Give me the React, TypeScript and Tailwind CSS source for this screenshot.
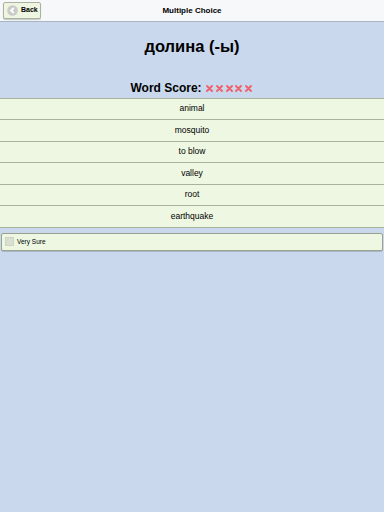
const answers = ["animal", "mosquito", "to blow", "valley", "root", "earthquake"];

const Cross = () => (
  <svg width="7" height="7" viewBox="0 0 7 7" className="mx-[1.4px]">
    <path d="M1 1 L6 6 M6 1 L1 6" stroke="#f0606a" strokeWidth="1.8" strokeLinecap="round" />
  </svg>
);

export default function App() {
  return (
    <div className="w-[384px] h-[512px] bg-[#c9d8ed] font-['Liberation_Sans',Arial,sans-serif] text-black">
      <div className="relative h-[22px] bg-[#f7f8fa] border-b border-[#a9b3c2] flex items-center justify-center">
        <button className="absolute left-[3px] top-[2px] h-[17px] w-[38px] flex items-center gap-[3px] pl-[3px] rounded-[2px] border border-[#a9b49c] bg-[#eef6e2] shadow-[0_1px_1px_rgba(0,0,0,0.2)]">
          <svg width="11" height="11" viewBox="0 0 11 11">
            <circle cx="5.5" cy="5.5" r="5.3" fill="#c9cbc9" />
            <path d="M6.8 3 L4 5.5 L6.8 8" stroke="#fff" strokeWidth="1.8" fill="none" />
          </svg>
          <span className="text-[7px] font-bold">Back</span>
        </button>
        <span className="text-[8px] font-bold">Multiple Choice</span>
      </div>
      <div className="pt-[16px] flex justify-center">
        <span className="text-[16.5px] font-bold leading-none">долина (-ы)</span>
      </div>
      <div className="mt-[26px] h-[14px] flex items-center justify-center">
        <span className="text-[12px] font-bold">Word Score:</span>
        <span className="flex items-center ml-[3px] mt-[2px]">
          <Cross />
          <Cross />
          <Cross />
          <Cross />
          <Cross />
        </span>
      </div>
      <div className="mt-[3px] border-t border-[#a9b39c] bg-[#eef7e2]">
        {answers.map((a) => (
          <div key={a} className="h-[21.5px] border-b border-[#a9b39c] flex items-center justify-center text-[8.5px]">
            {a}
          </div>
        ))}
      </div>
      <div className="mx-[1px] mt-[5px] h-[18px] rounded-[2px] border border-[#9aa18f] bg-[#eef7e2] flex items-center gap-[3px] pl-[3px] shadow-[0_1px_0_rgba(0,0,0,0.15)]">
        <div className="w-[9px] h-[9px] bg-[#d9e0d2] border border-[#cdd5c5]" />
        <span className="text-[6.5px]">Very Sure</span>
      </div>
    </div>
  );
}
